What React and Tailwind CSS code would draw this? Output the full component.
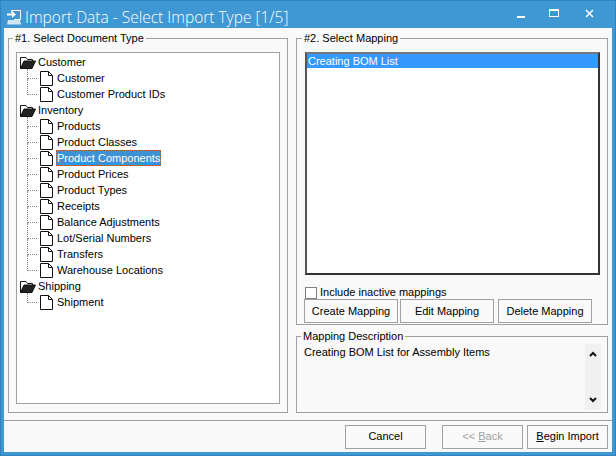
import { Fragment } from 'react';

const groups = [
  { name: 'Customer', items: ['Customer', 'Customer Product IDs'] },
  {
    name: 'Inventory',
    items: [
      'Products',
      'Product Classes',
      'Product Components',
      'Product Prices',
      'Product Types',
      'Receipts',
      'Balance Adjustments',
      'Lot/Serial Numbers',
      'Transfers',
      'Warehouse Locations',
    ],
  },
  { name: 'Shipping', items: ['Shipment'] },
];

const FolderIcon = () => (
  <svg width="16" height="13" viewBox="0 0 16 13" className="shrink-0">
    <path d="M0.5 12.5V1.5H6L7.5 3.5H12.5V5.5" fill="#fff" stroke="#111" />
    <path d="M0.5 12.5L4 5H15.5L12 12.5Z" fill="#222" stroke="#111" />
  </svg>
);

const DocIcon = () => (
  <svg width="13" height="15" viewBox="0 0 13 15" className="shrink-0">
    <path d="M0.5 0.5H8.5L12.5 4.5V14.5H0.5Z" fill="#fff" stroke="#111" />
    <path d="M8.5 0.5V4.5H12.5" fill="none" stroke="#111" />
  </svg>
);

const Button = ({ label, className = '', children }) => (
  <button className={`h-[24px] border border-[#a0a0a0] bg-[#f9f9f9] text-[11px] ${className}`}>
    {children || label}
  </button>
);

const Group = ({ title, className = '', children }) => (
  <fieldset className={`border border-[#a0a0a0] min-w-0 ${className}`}>
    <legend className="-ml-[3px] px-[2px] text-[11px] leading-[13px] text-black">{title}</legend>
    {children}
  </fieldset>
);

export default function App() {
  return (
    <div className="w-[616px] h-[456px] bg-[#3f97d3] border border-[#2f82c4] flex flex-col overflow-hidden font-['Liberation_Sans',sans-serif] text-black">
      {/* Title bar */}
      <div className="h-[27px] shrink-0 flex items-center pl-[6px] pr-[21px] pt-[5px] text-white">
        <svg width="14" height="15" viewBox="0 0 14 15" className="shrink-0">
          <path d="M4.5 3V0.5H13.5V9.5H7" fill="none" stroke="#fff" />
          <path d="M0 3.5H5V1L9 4.5L5 8V5.5H0Z" fill="#fff" />
          <path d="M1 10H13L14 14.5H0Z" fill="#cfe6f6" />
        </svg>
        <span className="ml-[4px] text-[15.5px] leading-[20px] font-['Open_Sans',sans-serif] font-light whitespace-nowrap">
          Import Data - Select Import Type [1/5]
        </span>
        <div className="ml-auto self-start flex items-start -mt-[0px] pt-[3px]">
          <div className="w-[8px] h-[2px] mt-[7px] bg-white" />
          <div className="ml-[24px] w-[10px] h-[8px] border border-t-2 border-white" />
          <svg width="9" height="9" viewBox="0 0 9 9" className="ml-[26px]">
            <path d="M1 1L8 8M8 1L1 8" stroke="#fff" strokeWidth="1.5" />
          </svg>
        </div>
      </div>

      {/* Body */}
      <div className="mx-[3px] h-[424px] bg-[#f9f9f9] flex flex-col">
        <div className="h-[393px] px-[4px] pt-[4px] flex gap-[8px] border-b border-[#a0a0a0]">
          <Group title="#1. Select Document Type" className="w-[280px] h-[381px] px-[7px] pt-[7px]">
            <div className="h-[352px] border border-[#a0a0a0] bg-white pt-[1px] pl-[3px] text-[11px] leading-[16px]">
              {groups.map((g) => (
                <Fragment key={g.name}>
                  <div className="h-[16px] flex items-center">
                    <FolderIcon />
                    <span className="ml-[2px]">{g.name}</span>
                  </div>
                  {g.items.map((item, i) => (
                    <div key={item} className="h-[16px] flex items-center relative">
                      <div className={`absolute left-[7px] bottom-[7px] border-l border-dotted border-[#888] ${i === 0 ? 'h-[10px]' : 'h-[16px]'}`} />
                      <div className="ml-[7px] w-[10px] border-t border-dotted border-[#888]" />
                      <div className="ml-[3px]"><DocIcon /></div>
                      {item === 'Product Components' ? (
                        <span className="ml-[3px] h-[16px] px-[1px] bg-[#3d92d6] text-white outline-1 -outline-offset-1 outline-dotted outline-[#b35a1f]">{item}</span>
                      ) : (
                        <span className="ml-[4px]">{item}</span>
                      )}
                    </div>
                  ))}
                </Fragment>
              ))}
            </div>
          </Group>

          <div className="w-[312px] flex flex-col gap-[5px]">
            <Group title="#2. Select Mapping" className="h-[293px] pl-[8px] pr-[7px] pt-[7px]">
              <div className="h-[223px] border-2 border-t-[#777] border-l-[#555] border-r-[#333] border-b-[#333] bg-white text-[11px]">
                <div className="h-[14px] leading-[14px] pl-[1px] bg-[#3399ff] text-white">Creating BOM List</div>
              </div>
              <div className="mt-[11px] h-[13px] flex items-center text-[11px]">
                <div className="w-[12px] h-[12px] border border-[#808080] bg-white" />
                <span className="ml-[3px]">Include inactive mappings</span>
              </div>
              <div className="-ml-[1px] flex">
                <Button label="Create Mapping" className="w-[94px]" />
                <Button label="Edit Mapping" className="ml-[2px] w-[94px]" />
                <Button label="Delete Mapping" className="ml-[4px] w-[94px]" />
              </div>
            </Group>
            <Group title="Mapping Description" className="h-[83px] pl-[7px] pr-[6px]">
              <div className="flex justify-between text-[11px]">
                <span className="pt-[2px] leading-[14px]">Creating BOM List for Assembly Items</span>
                <div className="w-[16px] h-[66px] mt-[1px] bg-[#f0f0f0] flex flex-col items-center justify-between py-[7px]">
                  <svg width="8" height="6" viewBox="0 0 8 6"><path d="M1 5L4 2L7 5" fill="none" stroke="#111" strokeWidth="2" /></svg>
                  <svg width="8" height="6" viewBox="0 0 8 6"><path d="M1 1L4 4L7 1" fill="none" stroke="#111" strokeWidth="2" /></svg>
                </div>
              </div>
            </Group>
          </div>
        </div>

        {/* Footer buttons */}
        <div className="flex-1 flex items-center justify-end pr-[4px]">
          <Button label="Cancel" className="w-[81px]" />
          <Button className="ml-[16px] w-[81px] text-[#a0a0a0]">
            {'<< '}<span className="underline">B</span>ack
          </Button>
          <Button className="ml-[4px] w-[81px]">
            <span className="underline">B</span>egin Import
          </Button>
        </div>
      </div>
    </div>
  );
}
